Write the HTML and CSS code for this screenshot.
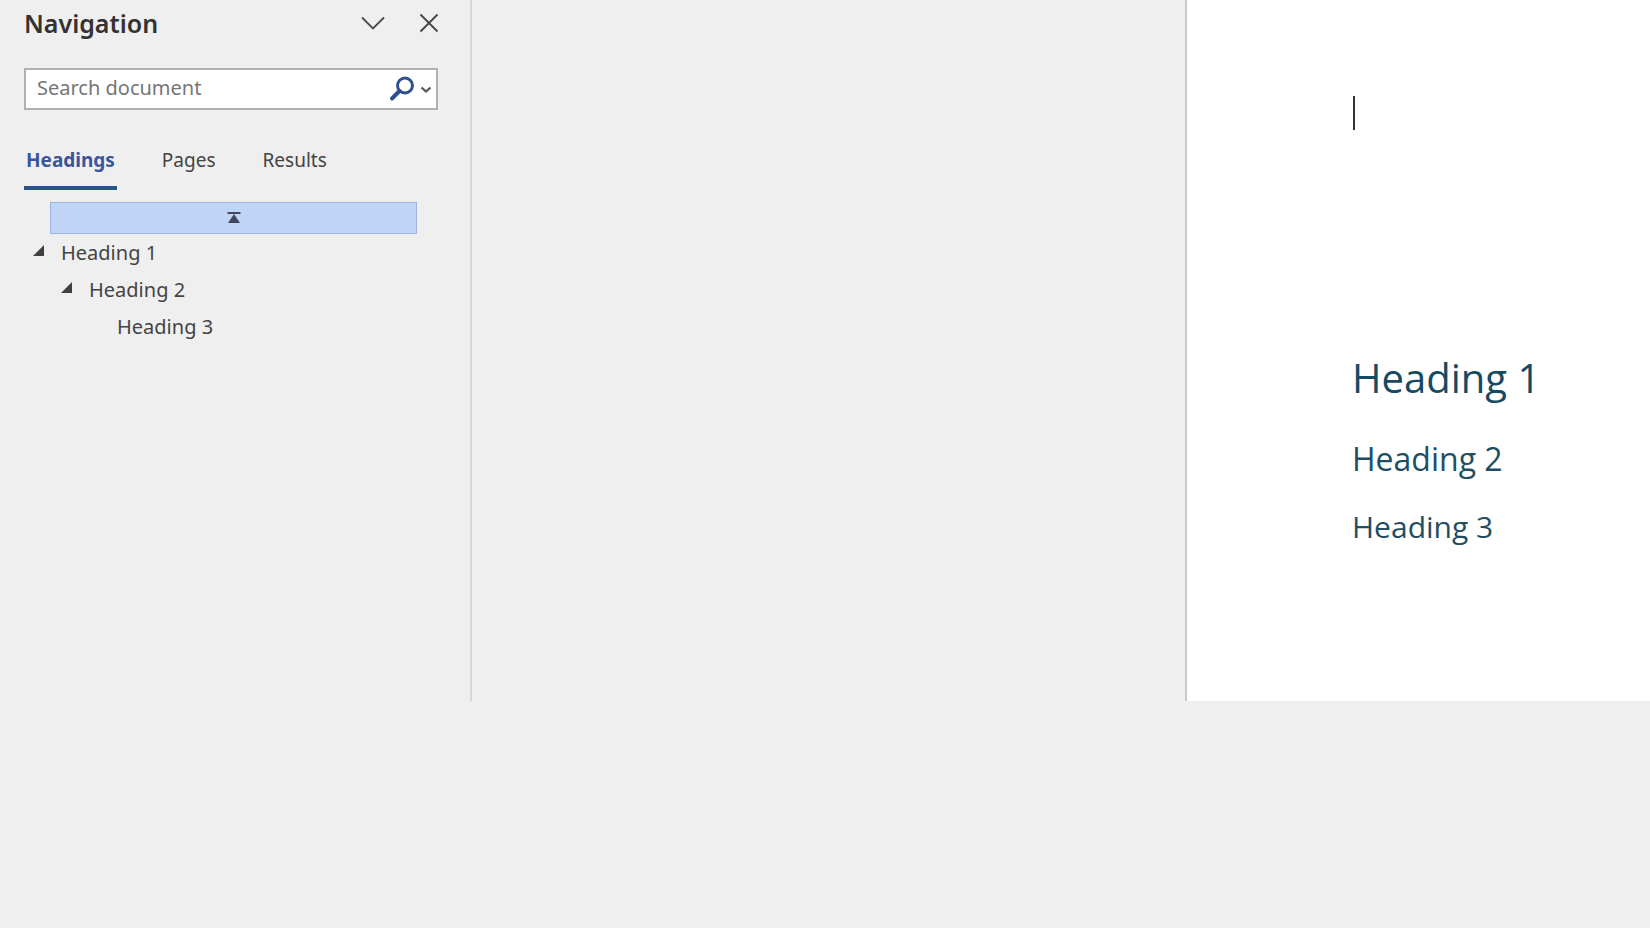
FILE: index.html
```html
<!DOCTYPE html>
<html lang="en">
<head>
    <meta charset="UTF-8">
    <meta name="viewport" content="width=device-width, initial-scale=1.0">
    <title>Navigation</title>
    <link rel="stylesheet" href="styles.css">
</head>
<body>
    <div class="workspace">
        <!-- Navigation pane -->
        <aside class="nav-pane">
            <header class="nav-header">
                <h2 class="nav-title">Navigation</h2>
                <button class="icon-button" type="button" aria-label="Pane options">
                    <svg width="26" height="26" viewBox="0 0 26 26"><path d="M2 7.5 L13 18.5 L24 7.5" fill="none" stroke="#4a4a4a" stroke-width="1.8"/></svg>
                </button>
                <button class="icon-button" type="button" aria-label="Close pane">
                    <svg width="26" height="26" viewBox="0 0 26 26"><path d="M4.500 4.500 L21.500 21.500 M21.500 4.500 L4.500 21.500" fill="none" stroke="#444" stroke-width="1.8"/></svg>
                </button>
            </header>

            <form class="search-box">
                <input class="search-input" type="text" placeholder="Search document" aria-label="Search document">
                <button class="search-button" type="button" aria-label="Search">
                    <svg width="26" height="26" viewBox="0 0 26 26">
                        <circle cx="17" cy="9.500" r="7.500" fill="none" stroke="#2f4f8f" stroke-width="3"/>
                        <path d="M11.500 15 L4 22.500" stroke="#2f4f8f" stroke-width="4" stroke-linecap="round"/>
                    </svg>
                </button>
                <button class="search-button" type="button" aria-label="Search options">
                    <svg width="12" height="12" viewBox="0 0 12 12"><path d="M1.500 4.500 L6 8.500 L10.500 4.500" fill="none" stroke="#555" stroke-width="2.200"/></svg>
                </button>
            </form>

            <nav class="tabs">
                <button class="tab active" type="button">Headings</button>
                <button class="tab" type="button">Pages</button>
                <button class="tab" type="button">Results</button>
            </nav>

            <button class="jump-top" type="button" aria-label="Jump to beginning">
                <svg width="14" height="12" viewBox="0 0 14 12"><path d="M0.500 1 H13.500" stroke="#44465c" stroke-width="2"/><path d="M7 2 L13 11 H1 Z" fill="#44465c"/></svg>
            </button>

            <ul class="tree">
                <li class="tree-item">
                    <svg class="arrow" width="12" height="12" viewBox="0 0 12 12"><path d="M11 0 V11 H0 Z" fill="#404040"/></svg>
                    <a href="#heading-1">Heading 1</a>
                </li>
                <li class="tree-item level-2">
                    <svg class="arrow" width="12" height="12" viewBox="0 0 12 12"><path d="M11 0 V11 H0 Z" fill="#404040"/></svg>
                    <a href="#heading-2">Heading 2</a>
                </li>
                <li class="tree-item level-3">
                    <a href="#heading-3">Heading 3</a>
                </li>
            </ul>
        </aside>

        <!-- Document page -->
        <main class="page">
            <div class="caret"></div>
            <h1 class="heading-1" id="heading-1">Heading 1</h1>
            <h2 class="heading-2" id="heading-2">Heading 2</h2>
            <h3 class="heading-3" id="heading-3">Heading 3</h3>
        </main>
    </div>
</body>
</html>
```
FILE: styles.css
```css
* {
    box-sizing: border-box;
}

body {
    margin: 0;
    background-color: #efefef;
    color: #444;
    font-family: "Noto Sans", "Open Sans", sans-serif;
    font-size: 20px;
}

button {
    padding: 0;
    border: none;
    background: none;
    color: inherit;
    font: inherit;
    cursor: pointer;
}

svg {
    display: block;
}

.workspace {
    display: grid;
    grid-template-columns: 472px 713fr 465fr;
}

/* Navigation pane */
.nav-pane {
    padding: 0 32px 0 24px;
    border-right: 2px solid #d6d6d6;
}

.nav-header {
    display: flex;
    align-items: center;
    gap: 30px;
    height: 46px;
    margin-bottom: 22px;
}

.nav-title {
    flex: 1;
    margin: 0;
    color: #333;
    font-size: 25px;
    font-weight: 600;
    line-height: 32px;
}

.nav-header .icon-button:last-child {
    margin-right: -4px;
}

.search-box {
    display: flex;
    align-items: center;
    gap: 6px;
    height: 42px;
    padding-right: 4px;
    border: 2px solid #b0b0b0;
    background-color: #fff;
}

.search-input {
    flex: 1;
    min-width: 0;
    padding: 0 11px 3px;
    border: none;
    outline: none;
    background: none;
    color: #444;
    font: inherit;
    line-height: 28px;
}

.search-input::placeholder {
    color: #767676;
}

.tabs {
    display: flex;
    gap: 43px;
    margin: 32px 0 12px;
    font-size: 19px;
}

.tab {
    height: 48px;
    padding: 0 2px 8px;
    border-bottom: 4px solid transparent;
}

.tab.active {
    border-bottom-color: #2b5586;
    color: #3a559b;
    font-weight: bold;
}

.jump-top {
    display: flex;
    align-items: center;
    justify-content: center;
    width: calc(100% - 47px);
    height: 32px;
    margin-left: 26px;
    border: 1px solid #9fb3dc;
    background-color: #c0d5f5;
}

.tree {
    margin: 0;
    padding: 0;
    list-style: none;
}

.tree-item {
    display: flex;
    align-items: center;
    gap: 16px;
    height: 37px;
    padding-left: 9px;
}

.tree-item.level-2 {
    padding-left: 37px;
}

.tree-item.level-3 {
    padding-left: 93px;
}

.tree-item a {
    color: inherit;
    text-decoration: none;
}

.arrow {
    margin-bottom: 4px;
}

/* Document page */
.page {
    grid-column: 3;
    padding: 96px 24px 154px 166px;
    border-left: 2px solid #c8c8c8;
    background-color: #fff;
    color: #1f4e63;
    font-family: "Open Sans", sans-serif;
}

.page h1,
.page h2,
.page h3 {
    margin: 0;
    font-weight: normal;
}

.caret {
    width: 2px;
    height: 34px;
    margin-bottom: 220px;
    background-color: #333;
}

.heading-1 {
    color: #154a63;
    font-size: 40px;
    line-height: 56px;
}

.page .heading-1,
.page .heading-2,
.page .heading-3 {
    margin-left: -1px;
}

.page .heading-2 {
    margin-top: 31px;
    font-size: 32px;
    line-height: 44px;
}

.page .heading-3 {
    margin-top: 26px;
    font-size: 30px;
    line-height: 40px;
}
```
